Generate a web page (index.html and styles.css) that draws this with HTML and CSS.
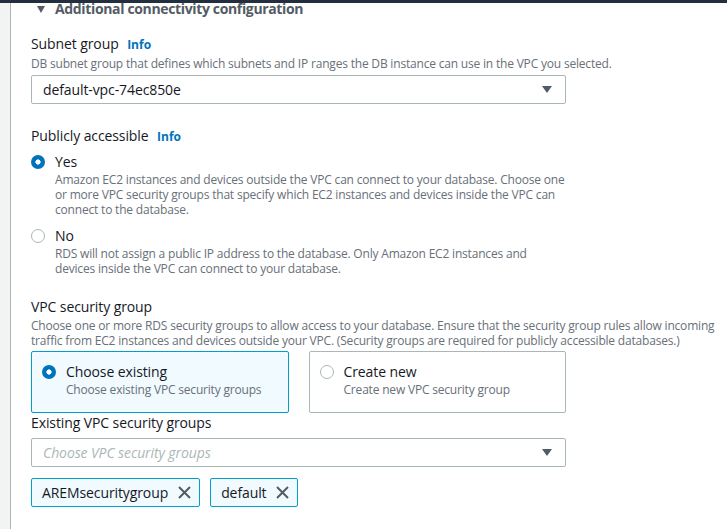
FILE: index.html
```html
<!DOCTYPE html>
<html>
<head>
  <meta charset="UTF-8">
  <title>Additional connectivity configuration</title>
  <link rel="stylesheet" href="styles.css">
</head>
<body>
  <div class="topbar"></div>
  <div class="page">
    <div class="gutter"></div>
    <div class="content">
      <h2 class="section-title"><span class="caret-down"></span>Additional connectivity configuration</h2>

      <!-- subnet group -->
      <div class="field subnet">
        <div class="label">Subnet group <span class="info">Info</span></div>
        <div class="desc under-label">DB subnet group that defines which subnets and IP ranges the DB instance can use in the VPC you selected.</div>
        <div class="select">
          <span>default-vpc-74ec850e</span>
          <span class="select-caret"></span>
        </div>
      </div>

      <!-- public access -->
      <div class="field public">
        <div class="label">Publicly accessible <span class="info">Info</span></div>
        <div class="radio-row">
          <span class="radio checked"></span>
          <div>
            <div class="radio-title">Yes</div>
            <div class="desc">Amazon EC2 instances and devices outside the VPC can connect to your database. Choose one<br>or more VPC security groups that specify which EC2 instances and devices inside the VPC can<br>connect to the database.</div>
          </div>
        </div>
        <div class="radio-row">
          <span class="radio"></span>
          <div>
            <div class="radio-title">No</div>
            <div class="desc">RDS will not assign a public IP address to the database. Only Amazon EC2 instances and<br>devices inside the VPC can connect to your database.</div>
          </div>
        </div>
      </div>

      <!-- security groups -->
      <div class="field security">
        <div class="label">VPC security group</div>
        <div class="desc under-label">Choose one or more RDS security groups to allow access to your database. Ensure that the security group rules allow incoming<br>traffic from EC2 instances and devices outside your VPC. (Security groups are required for publicly accessible databases.)</div>
        <div class="tiles">
          <div class="tile selected">
            <span class="radio checked"></span>
            <div>
              <div class="radio-title">Choose existing</div>
              <div class="desc">Choose existing VPC security groups</div>
            </div>
          </div>
          <div class="tile">
            <span class="radio"></span>
            <div>
              <div class="radio-title">Create new</div>
              <div class="desc">Create new VPC security group</div>
            </div>
          </div>
        </div>
        <div class="label">Existing VPC security groups</div>
        <div class="select">
          <span class="placeholder">Choose VPC security groups</span>
          <span class="select-caret"></span>
        </div>
        <div class="tokens">
          <div class="token">AREMsecuritygroup
            <svg width="13" height="13" viewBox="0 0 13 13"><path d="M1 1L12 12M12 1L1 12" stroke="#545b64" stroke-width="2" fill="none"/></svg>
          </div>
          <div class="token">default
            <svg width="13" height="13" viewBox="0 0 13 13"><path d="M1 1L12 12M12 1L1 12" stroke="#545b64" stroke-width="2" fill="none"/></svg>
          </div>
        </div>
      </div>
    </div>
  </div>
</body>
</html>
```

FILE: styles.css
```css
body {
  margin: 0;
  font-family: "Open Sans", "Noto Sans", sans-serif;
  color: #16191f;
  background: #fff;
  overflow: hidden;
}

.topbar {
  height: 3px;
  background-color: #232f3e;
}

.page {
  display: flex;
  height: 526px;
}

.gutter {
  width: 10px;
  background-color: #f2f3f3;
  border-right: 1px solid #aab7b8;
}

.content {
  padding-left: 20px;
  width: 535px;
}

.section-title {
  margin: -3px 0 0 6px;
  font-size: 14px;
  line-height: 18px;
  letter-spacing: -0.35px;
  font-weight: 700;
  color: #545b64;
  display: flex;
  align-items: center;
}

.caret-down {
  width: 0;
  height: 0;
  border-left: 4.5px solid transparent;
  border-right: 4.5px solid transparent;
  border-top: 7px solid #545b64;
  margin: 1px 10px 0 0;
}

.field.subnet {
  margin-top: 16px;
}

.field.public {
  margin-top: 22px;
}

.field.security {
  margin-top: 21px;
}

.label {
  font-size: 14px;
  line-height: 20px;
  letter-spacing: -0.1px;
}

.info {
  font-size: 12px;
  font-weight: 700;
  color: #0073bb;
  margin-left: 5px;
  letter-spacing: 0;
}

.desc {
  font-size: 12px;
  line-height: 15px;
  letter-spacing: -0.19px;
  color: #687078;
  white-space: nowrap;
}

.desc.under-label {
  margin-top: 1px;
}

.select {
  margin-top: 4px;
  height: 27px;
  border: 1px solid #aab7b8;
  border-radius: 2px;
  display: flex;
  align-items: center;
  justify-content: space-between;
  padding: 0 13px 0 11px;
  font-size: 14px;
  letter-spacing: -0.1px;
}

.field.security .select {
  margin-top: 5px;
}

.placeholder {
  color: #aab7b8;
  font-style: italic;
}

.select-caret {
  width: 0;
  height: 0;
  border-left: 5px solid transparent;
  border-right: 5px solid transparent;
  border-top: 7px solid #545b64;
}

.radio-row {
  display: flex;
  margin-top: 6px;
}

.radio-row + .radio-row {
  margin-top: 10px;
}

.radio {
  flex: none;
  box-sizing: border-box;
  width: 14px;
  height: 14px;
  border-radius: 50%;
  border: 1px solid #aab7b8;
  background: #fff;
  margin: 2px 10px 0 0;
}

.radio.checked {
  border: none;
  background: radial-gradient(circle, #fff 2.3px, #0073bb 2.9px);
}

.radio-title {
  font-size: 14px;
  line-height: 18px;
  letter-spacing: -0.1px;
  margin-bottom: 1px;
}

.tiles {
  display: flex;
  gap: 20px;
  margin-top: 3px;
}

.tile {
  flex: 1;
  display: flex;
  height: 62px;
  box-sizing: border-box;
  border: 1px solid #aab7b8;
  border-radius: 2px;
  padding: 11px 10px;
}

.tile.selected {
  background-color: #f1faff;
  border-color: #00a1c9;
}

.tokens {
  display: flex;
  gap: 10px;
  margin-top: 11px;
}

.token {
  display: flex;
  align-items: center;
  gap: 10px;
  height: 27px;
  padding: 0 8px 0 10px;
  border: 1px solid #00a1c9;
  border-radius: 2px;
  background-color: #f1faff;
  font-size: 14px;
  letter-spacing: -0.1px;
}
```
